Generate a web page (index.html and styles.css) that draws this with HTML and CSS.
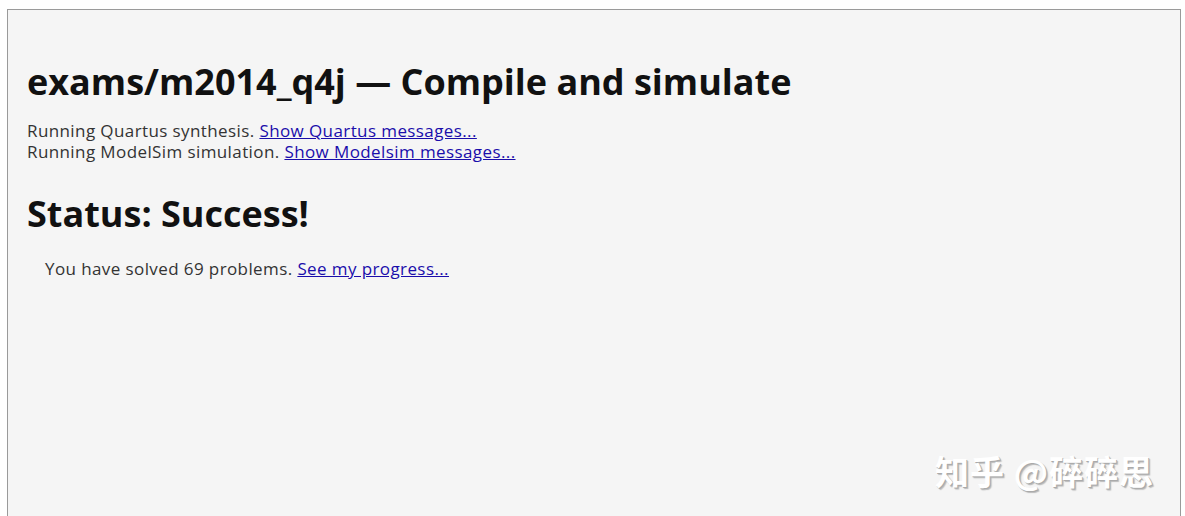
FILE: index.html
```html
<!DOCTYPE html>
<html>
<head>
<meta charset="utf-8">
<link rel="stylesheet" href="styles.css">
</head>
<body>
<div class="frame">
  <h1 class="title">exams/m2014_q4j — Compile and simulate</h1>
  <div class="log">
    <div>Running Quartus synthesis. <a href="#">Show Quartus messages...</a></div>
    <div>Running ModelSim simulation. <a href="#">Show Modelsim messages...</a></div>
  </div>
  <h1 class="status">Status: Success!</h1>
  <p class="solved">You have solved 69 problems. <a href="#">See my progress...</a></p>
  <div class="watermark">知乎 @碎碎思</div>
</div>
</body>
</html>
```
FILE: styles.css
```css
html, body {
  margin: 0;
  padding: 0;
  background: #ffffff;
}
body {
  padding: 9px 4px 0 7px;
  overflow: hidden;
  height: 516px;
  box-sizing: border-box;
}
.frame {
  position: relative;
  width: 1174px;
  height: 507px;
  box-sizing: border-box;
  border: 1px solid #9a9a9a;
  border-bottom: none;
  background: #f5f5f5;
  padding: 0 19px 0 19px;
  font-family: "Open Sans", sans-serif;
  font-size: 17px;
  letter-spacing: 0.4px;
  color: #333;
}
.title {
  font-family: "Open Sans", sans-serif;
  font-weight: 700;
  font-size: 36px;
  line-height: 48px;
  letter-spacing: 0;
  color: #111;
  margin: 48px 0 14px 0;
}
.log {
  line-height: 21px;
}
a {
  color: #1a0dab;
  text-decoration: underline;
}
.status {
  font-family: "Open Sans", sans-serif;
  font-weight: 700;
  font-size: 36px;
  line-height: 48px;
  letter-spacing: 0;
  color: #111;
  margin: 28px 0 20px 0;
}
.solved {
  margin: 0 0 0 18px;
  line-height: 21px;
}
.watermark {
  position: absolute;
  left: 927px;
  top: 436px;
  font-family: "Noto Sans CJK SC", sans-serif;
  font-weight: 700;
  font-size: 34px;
  color: #ffffff;
  text-shadow: 1px 1px 0 #aaa, 2px 2px 1px #bbb;
  letter-spacing: 1px;
}
```
